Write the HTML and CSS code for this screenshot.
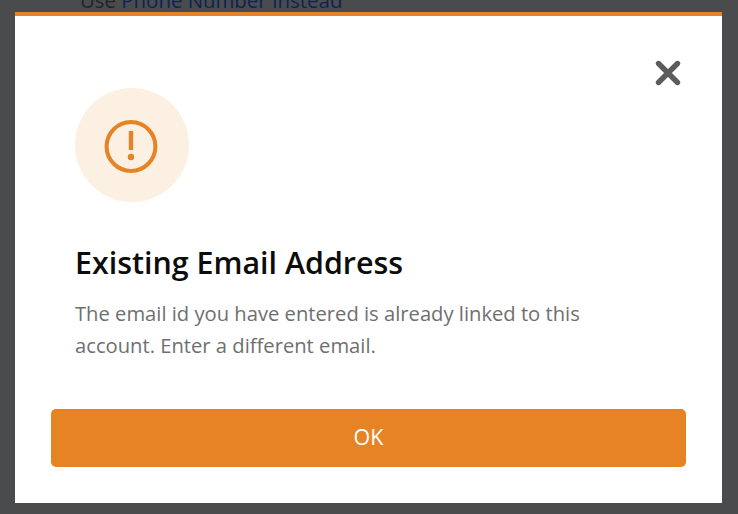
FILE: index.html
```html
<!DOCTYPE html>
<html lang="en">
<head>
  <meta charset="UTF-8">
  <meta name="viewport" content="width=device-width, initial-scale=1.0">
  <title>Existing Email Address</title>
  <link rel="stylesheet" href="styles.css">
</head>
<body>
  <!-- Page behind the dialog, only the last line shows -->
  <div class="behind">
    <p class="behind-line">Use <a href="#" class="behind-link">Phone Number Instead</a></p>
  </div>

  <div class="modal">
    <button class="modal-close" aria-label="Close">
      <svg width="28" height="28" viewBox="0 0 28 28">
        <path d="M4.5 4.5 L23.5 23.5 M23.5 4.5 L4.5 23.5" fill="none" stroke="#5c5c5c" stroke-width="5.4" stroke-linecap="round"/>
      </svg>
    </button>

    <div class="modal-icon">
      <svg width="60" height="60" viewBox="0 0 60 60">
        <circle cx="29" cy="31.5" r="24.4" fill="none" stroke="#e68325" stroke-width="4"/>
        <rect x="26.8" y="16" width="4.4" height="19" fill="#e68325"/>
        <circle cx="29" cy="42" r="3.2" fill="#e68325"/>
      </svg>
    </div>

    <h2 class="modal-title">Existing Email Address</h2>
    <p class="modal-text">The email id you have entered is already linked to this account. Enter a different email.</p>

    <button class="modal-ok">OK</button>
  </div>
</body>
</html>
```

FILE: styles.css
```css
html, body {
  height: 100%;
}

body {
  margin: 0;
  background: #4a4b4d;
  font-family: "Open Sans", sans-serif;
  overflow: hidden;
}

/* Page behind the overlay */
.behind {
  height: 12px;
  overflow: hidden;
  padding-left: 80px;
  display: flex;
  align-items: flex-end;
}

.behind-line {
  margin: 0;
  font-size: 20.4px;
  line-height: 24px;
  color: #242424;
  white-space: nowrap;
}

.behind-link {
  color: #0c2456;
  text-decoration: none;
}

/* Dialog */
.modal {
  width: 707px;
  height: 491px;
  box-sizing: border-box;
  margin-left: 15px;
  padding: 72px 36px 36px;
  background: #fff;
  border-top: 4px solid #e68325;
}

.modal-close {
  position: absolute;
  top: 59px;
  left: 654px;
  width: 28px;
  height: 28px;
  padding: 0;
  background: none;
  border: none;
  cursor: pointer;
}

.modal-icon {
  width: 114px;
  height: 114px;
  margin-left: 24px;
  border-radius: 50%;
  background: #fbf0e1;
  display: flex;
  align-items: center;
  justify-content: center;
}

.modal-title {
  margin: 40px 0 0 24px;
  font-size: 30.4px;
  line-height: 42px;
  font-weight: 600;
  color: #0c0c0c;
}

.modal-text {
  margin: 13px 0 0 24px;
  width: 530px;
  font-size: 20.2px;
  line-height: 32px;
  color: #6f6f6f;
}

.modal-ok {
  display: block;
  width: 635px;
  height: 58px;
  margin-top: 48px;
  padding: 0 0 3px;
  background: #e68325;
  border: none;
  border-radius: 5px;
  color: #fff;
  font-family: "Open Sans", sans-serif;
  font-size: 21.5px;
  font-weight: 500;
  cursor: pointer;
}
```
